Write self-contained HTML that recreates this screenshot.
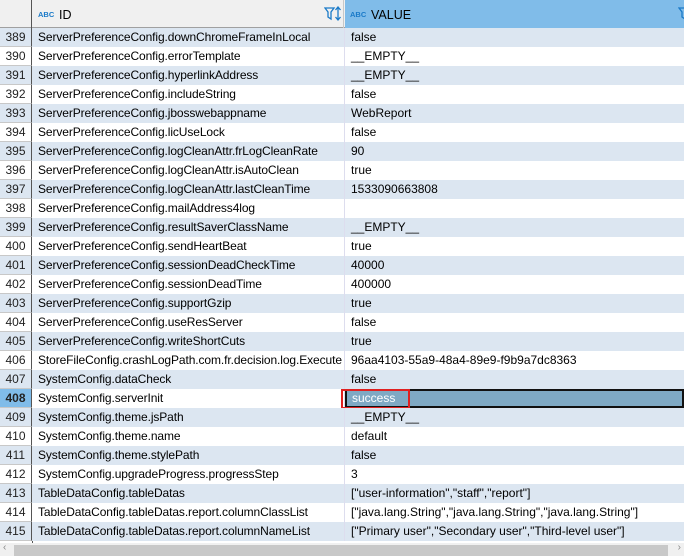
<!DOCTYPE html>
<html><head><style>
*{margin:0;padding:0;box-sizing:border-box}
body{width:684px;height:556px;overflow:hidden;background:#fff;font-family:"Liberation Sans",Arial,sans-serif;font-size:12px;color:#000;position:relative}
.hdr{position:absolute;top:0;left:0;width:684px;height:28px;background:#f0f0f0;border-bottom:1px solid #a0a0a0}
.h1{position:absolute;left:0;top:0;width:32px;height:28px;border-right:1px solid #555}
.h2{position:absolute;left:33px;top:0;width:311px;height:28px;border-right:1px solid #c8c8c8}
.h3{position:absolute;left:345px;top:0;width:339px;height:28px;background:#80bce9}
.abc{position:absolute;top:10px;font-size:7.5px;font-weight:bold;color:#1a7ac8;letter-spacing:0}
.ht{position:absolute;top:8px;font-size:12.5px}
.row{position:absolute;left:0;width:684px;height:19px}
.row.o{background:#dce6f1}
.rn{position:absolute;left:0;top:0;width:32px;height:19px;border-right:1px solid #555;border-bottom:1px solid #c8c8c8;text-align:center;line-height:19px;font-size:12px;color:#222}
.c1{position:absolute;left:33px;top:0;width:312px;height:19px;border-right:1px solid #dde;padding-left:5px;line-height:19px;white-space:nowrap;overflow:hidden;letter-spacing:-0.1px}
.c2{position:absolute;left:345px;top:0;width:339px;height:19px;padding-left:6px;line-height:19px;white-space:nowrap;overflow:hidden}
.sb{position:absolute;left:0;top:543px;width:684px;height:13px;background:#f0f0f0}
.th{position:absolute;left:14px;top:2px;width:654px;height:11px;background:#c8c8c8}
</style></head><body>
<div class="hdr">
<div class="h1"></div>
<div class="h2"><span class="abc" style="left:5px">ABC</span><span class="ht" style="left:26px">ID</span>
<svg style="position:absolute;left:291px;top:6px" width="18" height="16"><path d="M1 2h9l-3 4v7l-3-2V6z" fill="none" stroke="#1a7ac8" stroke-width="1.3"/><path d="M14 1v13M11.5 4L14 1l2.5 3M11.5 11l2.5 3 2.5-3" fill="none" stroke="#1a7ac8" stroke-width="1.3"/></svg></div>
<div class="h3"><span class="abc" style="left:5px">ABC</span><span class="ht" style="left:26px">VALUE</span>
<svg style="position:absolute;left:333px;top:6px" width="8" height="14"><path d="M1 2h9l-3 4v7l-3-2V6z" fill="none" stroke="#1a7ac8" stroke-width="1.3"/></svg></div>
</div>
<div class="row o" style="top:28px"><div class="rn">389</div><div class="c1">ServerPreferenceConfig.downChromeFrameInLocal</div><div class="c2">false</div></div>
<div class="row" style="top:47px"><div class="rn">390</div><div class="c1">ServerPreferenceConfig.errorTemplate</div><div class="c2">__EMPTY__</div></div>
<div class="row o" style="top:66px"><div class="rn">391</div><div class="c1">ServerPreferenceConfig.hyperlinkAddress</div><div class="c2">__EMPTY__</div></div>
<div class="row" style="top:85px"><div class="rn">392</div><div class="c1">ServerPreferenceConfig.includeString</div><div class="c2">false</div></div>
<div class="row o" style="top:104px"><div class="rn">393</div><div class="c1">ServerPreferenceConfig.jbosswebappname</div><div class="c2">WebReport</div></div>
<div class="row" style="top:123px"><div class="rn">394</div><div class="c1">ServerPreferenceConfig.licUseLock</div><div class="c2">false</div></div>
<div class="row o" style="top:142px"><div class="rn">395</div><div class="c1">ServerPreferenceConfig.logCleanAttr.frLogCleanRate</div><div class="c2">90</div></div>
<div class="row" style="top:161px"><div class="rn">396</div><div class="c1">ServerPreferenceConfig.logCleanAttr.isAutoClean</div><div class="c2">true</div></div>
<div class="row o" style="top:180px"><div class="rn">397</div><div class="c1">ServerPreferenceConfig.logCleanAttr.lastCleanTime</div><div class="c2">1533090663808</div></div>
<div class="row" style="top:199px"><div class="rn">398</div><div class="c1">ServerPreferenceConfig.mailAddress4log</div><div class="c2"></div></div>
<div class="row o" style="top:218px"><div class="rn">399</div><div class="c1">ServerPreferenceConfig.resultSaverClassName</div><div class="c2">__EMPTY__</div></div>
<div class="row" style="top:237px"><div class="rn">400</div><div class="c1">ServerPreferenceConfig.sendHeartBeat</div><div class="c2">true</div></div>
<div class="row o" style="top:256px"><div class="rn">401</div><div class="c1">ServerPreferenceConfig.sessionDeadCheckTime</div><div class="c2">40000</div></div>
<div class="row" style="top:275px"><div class="rn">402</div><div class="c1">ServerPreferenceConfig.sessionDeadTime</div><div class="c2">400000</div></div>
<div class="row o" style="top:294px"><div class="rn">403</div><div class="c1">ServerPreferenceConfig.supportGzip</div><div class="c2">true</div></div>
<div class="row" style="top:313px"><div class="rn">404</div><div class="c1">ServerPreferenceConfig.useResServer</div><div class="c2">false</div></div>
<div class="row o" style="top:332px"><div class="rn">405</div><div class="c1">ServerPreferenceConfig.writeShortCuts</div><div class="c2">true</div></div>
<div class="row" style="top:351px"><div class="rn">406</div><div class="c1">StoreFileConfig.crashLogPath.com.fr.decision.log.Execute</div><div class="c2">96aa4103-55a9-48a4-89e9-f9b9a7dc8363</div></div>
<div class="row o" style="top:370px"><div class="rn">407</div><div class="c1">SystemConfig.dataCheck</div><div class="c2">false</div></div>
<div class="row" style="top:389px"><div class="rn" style="background:#80bce9;font-weight:bold">408</div><div class="c1">SystemConfig.serverInit</div><div class="c2" style="background:#7fa9c4;border:2px solid #111;color:#fff;line-height:15px;padding-left:5px">success</div><div style="position:absolute;left:341px;top:0;width:69px;height:20px;border:2px solid #e02020"></div></div>
<div class="row o" style="top:408px"><div class="rn">409</div><div class="c1">SystemConfig.theme.jsPath</div><div class="c2">__EMPTY__</div></div>
<div class="row" style="top:427px"><div class="rn">410</div><div class="c1">SystemConfig.theme.name</div><div class="c2">default</div></div>
<div class="row o" style="top:446px"><div class="rn">411</div><div class="c1">SystemConfig.theme.stylePath</div><div class="c2">false</div></div>
<div class="row" style="top:465px"><div class="rn">412</div><div class="c1">SystemConfig.upgradeProgress.progressStep</div><div class="c2">3</div></div>
<div class="row o" style="top:484px"><div class="rn">413</div><div class="c1">TableDataConfig.tableDatas</div><div class="c2">["user-information","staff","report"]</div></div>
<div class="row" style="top:503px"><div class="rn">414</div><div class="c1">TableDataConfig.tableDatas.report.columnClassList</div><div class="c2">["java.lang.String","java.lang.String","java.lang.String"]</div></div>
<div class="row o" style="top:522px"><div class="rn">415</div><div class="c1">TableDataConfig.tableDatas.report.columnNameList</div><div class="c2">["Primary user","Secondary user","Third-level user"]</div></div>
<div style="position:absolute;left:32px;top:541px;width:1px;height:3px;background:#555"></div>
<div class="sb"><span style="position:absolute;left:3px;top:-1px;font-size:10px;color:#888">‹</span><div class="th"></div><span style="position:absolute;right:3px;top:-1px;font-size:10px;color:#888">›</span></div>
</body></html>
